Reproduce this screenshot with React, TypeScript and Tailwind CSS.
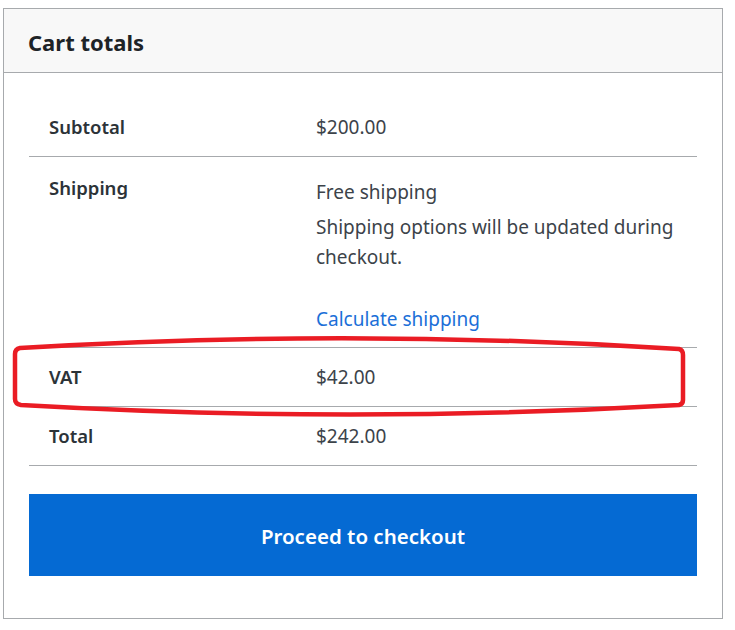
export default function App() {
  const font = { fontFamily: '"Noto Sans", "Open Sans", sans-serif' };
  return (
    <div className="relative min-h-screen bg-white pl-[3px] pt-[8px]" style={font}>
      <div className="w-[720px] border border-[#a7aaad] bg-white">
        {/* Header */}
        <div className="flex h-[64px] items-center border-b border-[#a7aaad] bg-[#f8f8f8] px-[24px] pt-[3px]">
          <h2 className="text-[22px] font-bold text-[#1d2327]">Cart totals</h2>
        </div>

        {/* Body */}
        <div className="px-[25px] pb-[42px] pt-[25px]">
          <div className="text-[19px] leading-[28px] text-[#3c434a]">
            <div className="grid grid-cols-[287px_1fr] border-b border-[#a7aaad] py-[15px]">
              <div className="pl-[20px] text-[18.5px] font-semibold text-[#2c3338]">Subtotal</div>
              <div>$200.00</div>
            </div>

            <div className="grid grid-cols-[287px_1fr] border-b border-[#a7aaad]">
              <div className="pl-[20px] pt-[17px] text-[18.5px] font-semibold text-[#2c3338]">Shipping</div>
              <div className="pb-[13px] pt-[20px] leading-[30px]">
                <div>Free shipping</div>
                <p className="mt-[5px]">Shipping options will be updated during checkout.</p>
                <a href="#" className="mt-[32px] block text-[#1b6fd8]">
                  Calculate shipping
                </a>
              </div>
            </div>

            <div className="grid grid-cols-[287px_1fr] border-b border-[#a7aaad] py-[15px]">
              <div className="pl-[20px] text-[18.5px] font-semibold text-[#2c3338]">VAT</div>
              <div>$42.00</div>
            </div>

            <div className="grid grid-cols-[287px_1fr] border-b border-[#a7aaad] py-[15px]">
              <div className="pl-[20px] text-[18.5px] font-semibold text-[#2c3338]">Total</div>
              <div>$242.00</div>
            </div>
          </div>

          <button className="mt-[28px] flex h-[82px] w-full items-center justify-center bg-[#056ad3] pt-[2px] text-[20.5px] font-semibold text-white">
            Proceed to checkout
          </button>
        </div>
      </div>

      {/* Annotation */}
      <svg
        className="pointer-events-none absolute left-0 top-0"
        width="735"
        height="630"
        viewBox="0 0 735 630"
      >
        <path
          d="M20 348 Q 350 328 679 349 Q 683 350 683 355 L 683 400 Q 683 404 679 405 Q 350 424 21 405 Q 15 404 15 399 L 15 354 Q 15 349 20 348 Z"
          fill="none"
          stroke="#ea1c24"
          strokeWidth="4.5"
        />
      </svg>
    </div>
  );
}
